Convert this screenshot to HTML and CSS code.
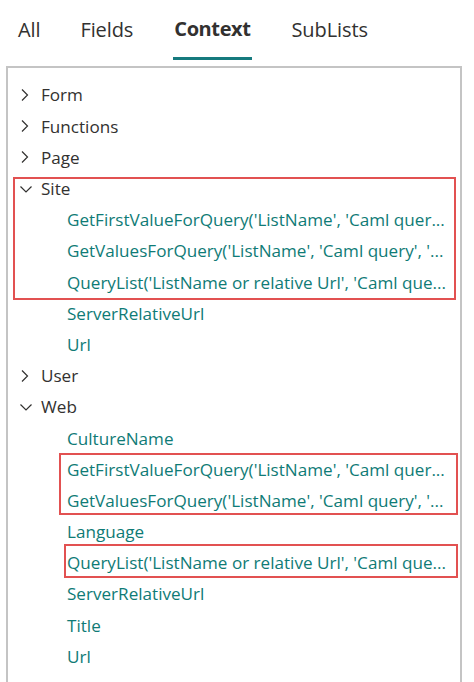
FILE: index.html
```
<!DOCTYPE html>
<html>
<head>
<meta charset="utf-8">
<link rel="stylesheet" href="styles.css">
</head>
<body>
<nav class="tabs">
  <div class="tab">All</div>
  <div class="tab">Fields</div>
  <div class="tab active">Context</div>
  <div class="tab">SubLists</div>
</nav>
<div class="panel">
  <div class="tree">
    <div class="row node"><svg class="chev" viewBox="0 0 10 14"><path d="M2 1.5 L7.5 7 L2 12.5"/></svg><span>Form</span></div>
    <div class="row node"><svg class="chev" viewBox="0 0 10 14"><path d="M2 1.5 L7.5 7 L2 12.5"/></svg><span>Functions</span></div>
    <div class="row node"><svg class="chev" viewBox="0 0 10 14"><path d="M2 1.5 L7.5 7 L2 12.5"/></svg><span>Page</span></div>
    <div class="row node"><svg class="chev down" viewBox="0 0 14 10"><path d="M1.5 2.5 L7 8 L12.5 2.5"/></svg><span>Site</span></div>
    <div class="row leaf">GetFirstValueForQuery('ListName', 'Caml quer...</div>
    <div class="row leaf">GetValuesForQuery('ListName', 'Caml query', '...</div>
    <div class="row leaf">QueryList('ListName or relative Url', 'Caml que...</div>
    <div class="row leaf">ServerRelativeUrl</div>
    <div class="row leaf">Url</div>
    <div class="row node"><svg class="chev" viewBox="0 0 10 14"><path d="M2 1.5 L7.5 7 L2 12.5"/></svg><span>User</span></div>
    <div class="row node"><svg class="chev down" viewBox="0 0 14 10"><path d="M1.5 2.5 L7 8 L12.5 2.5"/></svg><span>Web</span></div>
    <div class="row leaf">CultureName</div>
    <div class="row leaf">GetFirstValueForQuery('ListName', 'Caml quer...</div>
    <div class="row leaf">GetValuesForQuery('ListName', 'Caml query', '...</div>
    <div class="row leaf">Language</div>
    <div class="row leaf">QueryList('ListName or relative Url', 'Caml que...</div>
    <div class="row leaf">ServerRelativeUrl</div>
    <div class="row leaf">Title</div>
    <div class="row leaf">Url</div>
  </div>
  <div class="mark mark-site"></div>
  <div class="mark mark-web1"></div>
  <div class="mark mark-web2"></div>
</div>
</body>
</html>
```
FILE: styles.css
```
html, body {
  margin: 0;
  padding: 0;
  background: #ffffff;
}
body {
  font-family: "Open Sans", "Noto Sans", sans-serif;
  color: #323130;
  width: 474px;
  height: 682px;
  overflow: hidden;
}
.tabs {
  display: flex;
  height: 60px;
  padding-left: 18px;
  gap: 40px;
  box-sizing: border-box;
}
.tab {
  font-size: 20px;
  line-height: 60px;
  height: 60px;
  box-sizing: border-box;
  color: #323130;
  letter-spacing: -0.1px;
}
.tab.active {
  font-weight: 700;
  border-bottom: 3px solid #167a7e;
  line-height: 57px;
  padding: 0 1px;
  letter-spacing: -0.4px;
}
.panel {
  position: relative;
  margin: 6px 0 0 6px;
  width: 456px;
  height: 616px;
  box-sizing: border-box;
  border: 2px solid #c4c4c4;
  border-bottom: none;
  overflow: hidden;
}
.tree {
  padding-top: 11.4px;
}
.row {
  height: 31.2px;
  display: flex;
  align-items: center;
  font-size: 17.1px;
  white-space: nowrap;
  overflow: hidden;
}
.node {
  padding-left: 12px;
  color: #323130;
}
.chev {
  width: 10px;
  height: 14px;
  margin-right: 11px;
  fill: none;
  stroke: #323130;
  stroke-width: 1.2;
}
.chev.down {
  width: 14px;
  height: 10px;
  margin-left: -1px;
  margin-right: 8px;
}
.leaf {
  padding-left: 59px;
  color: #0f7b76;
}
.mark {
  position: absolute;
  border: 2px solid #e25151;
  box-sizing: border-box;
}
.mark-site {
  left: 5px;
  top: 109px;
  width: 443px;
  height: 123px;
}
.mark-web1 {
  left: 51px;
  top: 385px;
  width: 399px;
  height: 62px;
}
.mark-web2 {
  left: 56px;
  top: 476px;
  width: 394px;
  height: 34px;
}
```
